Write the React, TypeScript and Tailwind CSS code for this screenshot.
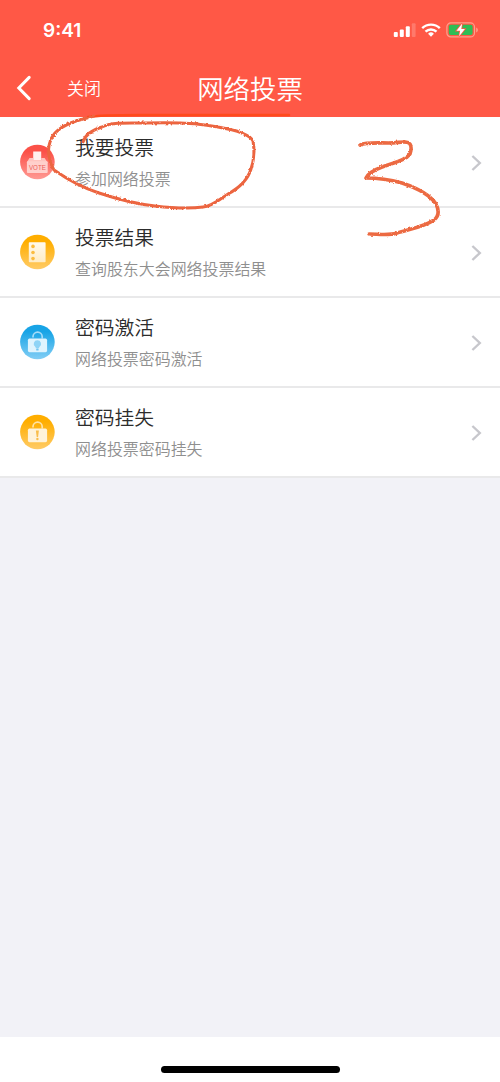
import React from "react";

interface MenuItem {
  title: string;
  desc: string;
  icon: React.ReactNode;
}

function VoteIcon() {
  return (
    <svg width="36" height="36" viewBox="0 0 36 36">
      <defs>
        <linearGradient id="vote-bg" x1="0" y1="0" x2="0" y2="1">
          <stop offset="0.2" stopColor="#fb5148" />
          <stop offset="1" stopColor="#ff9a94" />
        </linearGradient>
      </defs>
      <circle cx="18.4" cy="18" r="17.3" fill="url(#vote-bg)" />
      <path d="M14.2 7.5h8v8.5h-8z" fill="#fff0ee" />
      <path d="M10.5 14h3.7v2h8v-2h3.4l2.8 4.3H7.9z" fill="#ffc4bf" />
      <rect x="7.9" y="17.2" width="20.8" height="11.8" rx="1" fill="#ffd0cc" />
      <text
        x="10"
        y="26.3"
        textLength="16.8"
        lengthAdjust="spacingAndGlyphs"
        fontSize="8"
        className="font-['Liberation_Sans',sans-serif]"
        fill="#ee5f58"
      >
        VOTE
      </text>
    </svg>
  );
}

function ResultIcon() {
  return (
    <svg width="36" height="36" viewBox="0 0 36 36">
      <defs>
        <linearGradient id="result-bg" x1="0" y1="0" x2="0" y2="1">
          <stop offset="0.2" stopColor="#ffae00" />
          <stop offset="1" stopColor="#ffcb66" />
        </linearGradient>
        <linearGradient id="result-page" x1="0" y1="0" x2="0" y2="1">
          <stop offset="0" stopColor="#fffaf0" />
          <stop offset="1" stopColor="#ffecc4" />
        </linearGradient>
      </defs>
      <circle cx="18.4" cy="18" r="17.3" fill="url(#result-bg)" />
      <rect x="9.8" y="8.3" width="16.8" height="20" rx="0.8" fill="url(#result-page)" />
      <circle cx="14" cy="12.4" r="1.8" fill="#fbbc40" />
      <circle cx="14" cy="18.5" r="1.8" fill="#fbbc40" />
      <circle cx="14" cy="24.6" r="1.8" fill="#fbbc40" />
    </svg>
  );
}

function ActivateIcon() {
  return (
    <svg width="36" height="36" viewBox="0 0 36 36">
      <defs>
        <linearGradient id="activate-bg" x1="0" y1="0" x2="0" y2="1">
          <stop offset="0.2" stopColor="#18a4e6" />
          <stop offset="1" stopColor="#82cef5" />
        </linearGradient>
      </defs>
      <circle cx="18.4" cy="18" r="17.3" fill="url(#activate-bg)" />
      <path d="M14 13.6v-.8a4.6 4.6 0 0 1 9.2 0v1.6" fill="none" stroke="#a5dcf8" strokeWidth="1.7" />
      <rect x="8.9" y="14.6" width="19.2" height="13.6" rx="1.6" fill="#dff4fe" />
      <path
        d="M18.4 16.2a3.6 3.6 0 0 1 2.2 6.5c-.5.5-.6 1-.6 1.5h-3.2c0-.5-.1-1-.6-1.5a3.6 3.6 0 0 1 2.2-6.5z"
        fill="#8fd4f6"
      />
      <rect x="17.2" y="24.6" width="2.4" height="2" rx="0.6" fill="#6fc6f2" />
    </svg>
  );
}

function LossIcon() {
  return (
    <svg width="36" height="36" viewBox="0 0 36 36">
      <defs>
        <linearGradient id="loss-bg" x1="0" y1="0" x2="0" y2="1">
          <stop offset="0.2" stopColor="#ffae00" />
          <stop offset="1" stopColor="#ffcb66" />
        </linearGradient>
      </defs>
      <circle cx="18.4" cy="18" r="17.3" fill="url(#loss-bg)" />
      <path d="M14 13.6v-.8a4.6 4.6 0 0 1 9.2 0v1.6" fill="none" stroke="#ffe3a6" strokeWidth="1.7" />
      <rect x="8.9" y="14.6" width="19.2" height="13.6" rx="1.6" fill="#fff3da" />
      <path d="M16.9 16.6h3l-.8 6.4h-1.4z" fill="#f9bd4b" />
      <circle cx="18.4" cy="25" r="1.2" fill="#f9bd4b" />
    </svg>
  );
}

const menuItems: MenuItem[] = [
  { title: "我要投票", desc: "参加网络投票", icon: <VoteIcon /> },
  { title: "投票结果", desc: "查询股东大会网络投票结果", icon: <ResultIcon /> },
  { title: "密码激活", desc: "网络投票密码激活", icon: <ActivateIcon /> },
  { title: "密码挂失", desc: "网络投票密码挂失", icon: <LossIcon /> },
];

function StatusBar() {
  return (
    <div className="flex h-[60px] items-center justify-between pl-[43px] pr-[21px] text-white">
      <span className="font-['Inter',sans-serif] text-[19px] font-semibold leading-none">9:41</span>
      <div className="flex items-center">
        <svg width="23" height="14" viewBox="0 0 23 14" fill="#fff">
          <rect x="0.8" y="9" width="4" height="5" rx="1" />
          <rect x="6.8" y="6.5" width="4" height="7.5" rx="1" />
          <rect x="12.8" y="3.3" width="4" height="10.7" rx="1" />
          <rect x="18.8" y="0.3" width="3.8" height="13.7" rx="1" opacity="0.2" />
        </svg>
        <svg className="ml-[5px]" width="20" height="14" viewBox="0 0 20 14" fill="none" stroke="#fff" strokeWidth="2.4">
          <path d="M1.2 5.2a12.6 12.6 0 0 1 17.6 0" />
          <path d="M4.5 8.7a7.9 7.9 0 0 1 11 0" />
          <path d="M10 13.7l-2.9-3a4.2 4.2 0 0 1 5.8 0z" fill="#fff" stroke="none" />
        </svg>
        <svg className="ml-[5px]" width="33" height="16" viewBox="0 0 33 16">
          <rect x="0.9" y="0.9" width="27.6" height="14" rx="4" fill="none" stroke="#ffa08c" strokeWidth="1.2" />
          <rect x="2.8" y="2.7" width="23.8" height="10.4" rx="2" fill="#30bd55" />
          <path d="M30.2 5.4c2.2.8 2.2 4.2 0 5z" fill="#ffa08c" />
          <path
            d="M16.2 1.6L10.5 8.8h3.6l-.9 5.4 5.7-7.2h-3.6z"
            fill="#fff"
            stroke="#ff5846"
            strokeWidth="1.6"
            paintOrder="stroke"
          />
        </svg>
      </div>
    </div>
  );
}

function Header() {
  return (
    <header className="h-[117px] bg-[#ff5846] text-white">
      <StatusBar />
      <div className="grid h-[57px] grid-cols-[150px_200px_150px] items-center">
        <div className="flex items-center pl-4">
          <svg className="-mt-0.5" width="16" height="26" viewBox="0 0 16 26" fill="none" stroke="#fff" strokeWidth="3" strokeLinecap="round">
            <path d="M13.2 2.4L2.8 13l10.4 10.6" />
          </svg>
          <span className="-mt-0.5 ml-[35px] text-[17px] font-[350]">关闭</span>
        </div>
        <h1 className="text-center text-[26.4px] font-[350] leading-none">网络投票</h1>
      </div>
    </header>
  );
}

function MenuRow({ item }: { item: MenuItem }) {
  return (
    <div className="flex h-[90px] border-b-2 border-[#e9e9ea] bg-white pl-[19px] pr-[17px]">
      <div className="mt-[26px] shrink-0">{item.icon}</div>
      <div className="ml-5 flex-1 pt-[14px] font-[350]">
        <div className="text-[19.8px] leading-[30px] text-[#2c2c2c]">{item.title}</div>
        <div className="mt-1 text-[15.95px] leading-6 text-[#8f8f8f]">{item.desc}</div>
      </div>
      <svg className="mt-[36px]" width="13" height="18" viewBox="0 0 13 18" fill="none" stroke="#c7c7cc" strokeWidth="2.4">
        <path d="M2.4 2l7.4 7-7.4 7" />
      </svg>
    </div>
  );
}

// hand-drawn marks laid over the list
function Annotations() {
  return (
    <svg
      className="pointer-events-none absolute left-0 top-0"
      width="500"
      height="250"
      viewBox="0 0 500 250"
      fill="none"
      strokeLinecap="round"
      strokeLinejoin="round"
    >
      <defs>
        <filter id="crayon" filterUnits="userSpaceOnUse" x="0" y="0" width="500" height="250">
          <feTurbulence type="fractalNoise" baseFrequency="0.45" numOctaves="2" seed="4" result="noise" />
          <feDisplacementMap in="SourceGraphic" in2="noise" scale="2.6" xChannelSelector="R" yChannelSelector="G" />
        </filter>
      </defs>
      <path d="M88 117C102 114.500 125 115 160 115H289" stroke="#ff4a1c" strokeWidth="2.6" />
      <g filter="url(#crayon)">
        <path
          d="M83 142C85 135 92 130 102 127C113 122 127 123 145 123C175 122 199 123 218 127C235 130 250 134 253 141C255 151 254 160 251 169C248 179 239 188 228 194C220 199 213 206 203 207C189 209 172 208 155 206C137 204 117 199 99 193C83 188 67 179 54 170C49 162 47 151 50 142C53 131 64 125 76 121L94 116"
          stroke="#ec6540"
          strokeWidth="3"
        />
        <path
          d="M360 145C366 142 378 143 389 143C399 143 407 140 410 144C412 147 411 151 410 154C405 161 392 163 382 167C374 170 368 174 366 178C378 178 391 180 402 183C417 188 430 195 436 204C439 210 439 216 434 220C424 227 410 229 397 233C388 236 378 234 369 234"
          stroke="#ec6a42"
          strokeWidth="3.6"
        />
      </g>
    </svg>
  );
}

export default function App() {
  return (
    <div className="relative flex h-[1082px] w-[500px] flex-col overflow-hidden bg-[#f2f2f7] font-['Noto_Sans_CJK_SC',sans-serif]">
      <Header />
      <main className="flex-1">
        <div className="bg-white pt-px">
          {menuItems.map((item) => (
            <MenuRow key={item.title} item={item} />
          ))}
        </div>
      </main>
      <footer className="flex h-[45px] justify-center bg-white pt-[29px]">
        <div className="h-[7px] w-[179px] rounded-full bg-black" />
      </footer>
      <Annotations />
    </div>
  );
}
